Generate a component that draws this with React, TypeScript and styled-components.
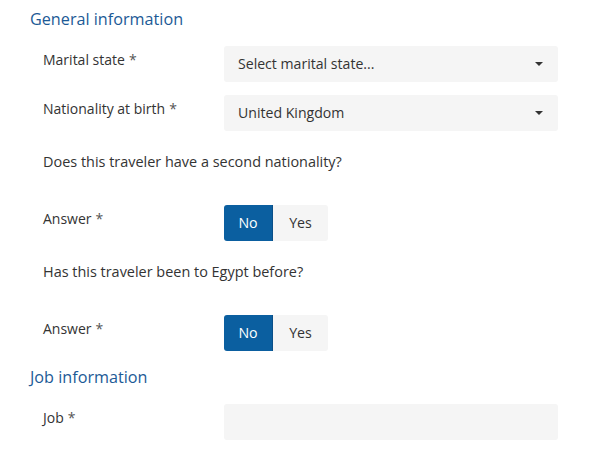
import React from "react";
import styled, { createGlobalStyle } from "styled-components";

const Global = createGlobalStyle`
  html, body { margin: 0; padding: 0; background: #fff; }
  body { font-family: "Open Sans", "Liberation Sans", sans-serif; color: #333; }
  * { box-sizing: border-box; }
`;

const Page = styled.div`
  width: 600px;
  display: flex;
  flex-direction: column;
  padding: 7px 42px 0 30px;
`;

const SectionTitle = styled.h2<{ $top?: number }>`
  margin: ${(p) => p.$top ?? 0}px 0 15px;
  font-size: 16.2px;
  line-height: 24px;
  font-weight: 400;
  color: #1c5a96;
`;

const Row = styled.div`
  display: flex;
  align-items: flex-start;
  padding-left: 13px;
  margin-bottom: 13px;
`;

const Label = styled.label`
  width: 181px;
  flex-shrink: 0;
  padding-top: 4px;
  font-size: 14px;
  line-height: 20px;
  color: #333;
`;

const Req = styled.span`
  color: #555;
  margin-left: 4px;
`;

const Question = styled.p`
  margin: 8px 0 33px;
  padding-left: 13px;
  font-size: 14.45px;
  line-height: 20px;
  color: #333;
`;

const SelectBox = styled.div`
  flex: 1;
  height: 36px;
  display: flex;
  align-items: center;
  justify-content: space-between;
  padding: 0 15px 0 14px;
  background: #f5f5f5;
  border-radius: 3px;
  font-size: 14.1px;
  line-height: 36px;
  color: #333;
`;

const Caret = styled.span`
  width: 0;
  height: 0;
  border-left: 4px solid transparent;
  border-right: 4px solid transparent;
  border-top: 4px solid #333;
`;

const TextInput = styled.div`
  flex: 1;
  height: 36px;
  background: #f5f5f5;
  border-radius: 3px;
`;

const Toggle = styled.div`
  display: flex;
  height: 36px;
  border-radius: 3px;
  overflow: hidden;
`;

const ToggleButton = styled.button<{ $active?: boolean }>`
  height: 36px;
  width: ${(p) => (p.$active ? 49 : 55)}px;
  padding: 0;
  border: none;
  border-right: ${(p) => (p.$active ? "1px solid #0a4f88" : "none")};
  background: ${(p) => (p.$active ? "#0b5fa0" : "#f5f5f5")};
  color: ${(p) => (p.$active ? "#fff" : "#333")};
  font-family: "Open Sans", "Liberation Sans", sans-serif;
  font-size: 14.2px;
  line-height: 36px;
  cursor: pointer;
`;

function Select({ value }: { value: string }) {
  return (
    <SelectBox>
      <span>{value}</span>
      <Caret />
    </SelectBox>
  );
}

function YesNo() {
  return (
    <Toggle>
      <ToggleButton $active>No</ToggleButton>
      <ToggleButton>Yes</ToggleButton>
    </Toggle>
  );
}

export default function App() {
  return (
    <>
      <Global />
      <Page>
        <SectionTitle>General information</SectionTitle>
        <Row>
          <Label>
            Marital state<Req>*</Req>
          </Label>
          <Select value="Select marital state..." />
        </Row>
        <Row>
          <Label>
            Nationality at birth<Req>*</Req>
          </Label>
          <Select value="United Kingdom" />
        </Row>
        <Question>Does this traveler have a second nationality?</Question>
        <Row>
          <Label>
            Answer<Req>*</Req>
          </Label>
          <YesNo />
        </Row>
        <Question>Has this traveler been to Egypt before?</Question>
        <Row>
          <Label>
            Answer<Req>*</Req>
          </Label>
          <YesNo />
        </Row>
        <SectionTitle $top={1}>Job information</SectionTitle>
        <Row>
          <Label>
            Job<Req>*</Req>
          </Label>
          <TextInput />
        </Row>
      </Page>
    </>
  );
}
